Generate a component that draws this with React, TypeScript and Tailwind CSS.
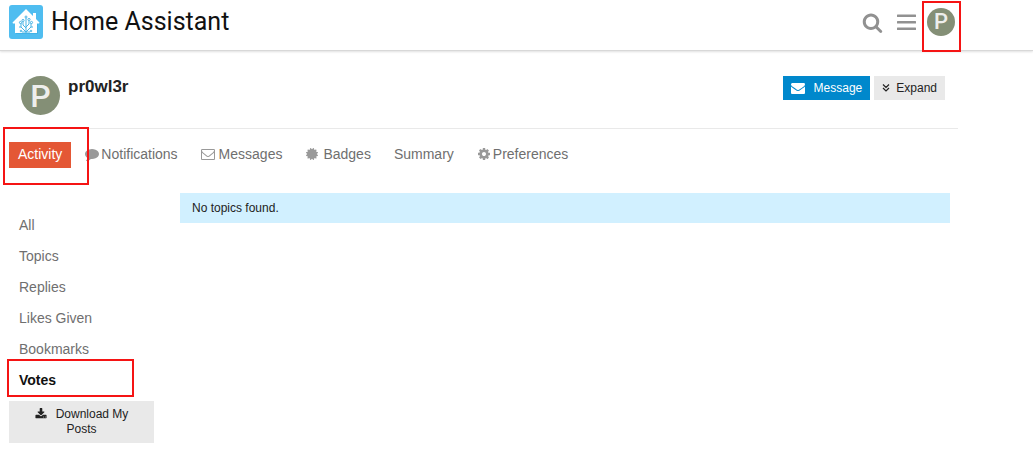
import clsx from 'clsx';

const icons = {
  search:
    'M1216 832q0-185-131.5-316.5t-316.5-131.5-316.5 131.5-131.5 316.5 131.5 316.5 316.5 131.5 316.5-131.5 131.5-316.5zm512 832q0 52-38 90t-90 38q-54 0-90-38l-343-342q-179 124-399 124-143 0-273.5-55.5t-225-150-150-225-55.5-273.5 55.5-273.5 150-225 225-150 273.5-55.5 273.5 55.5 225 150 150 225 55.5 273.5q0 220-124 399l343 343q37 37 37 90z',
  envelope:
    'M1792 710v794q0 66-47 113t-113 47h-1472q-66 0-113-47t-47-113v-794q44 49 101 87 362 246 497 345 57 42 92.5 65.5t94.5 48 110 24.5h2q51 0 110-24.5t94.5-48 92.5-65.5q170-123 498-345 57-39 100-87zm0-294q0 79-49 151t-122 123q-376 261-468 325-10 7-42.5 31t-54 38.5-52 32.5-57.5 27-50 9h-2q-23 0-50-9t-57.5-27-52-32.5-54-38.5-42.5-31q-91-64-262-182.5t-205-142.5q-62-42-117-115.5t-55-136.5q0-78 41.5-130t118.5-52h1472q65 0 112.5 47t47.5 113z',
  envelopeOutline:
    'M1664 1504v-768q-32 36-69 66-268 206-426 338-51 43-83 67t-86.5 48.5-102.5 24.5h-2q-48 0-102.5-24.5t-86.5-48.5-83-67q-158-132-426-338-37-30-69-66v768q0 13 9.5 22.5t22.5 9.5h1472q13 0 22.5-9.5t9.5-22.5zm0-1051v-24.5l-.5-13-3-12.5-5.5-9-9-7.5-14-2.5h-1472q-13 0-22.5 9.5t-9.5 22.5q0 168 147 284 193 152 401 317 6 5 35 29.5t46 37.5 44.5 31.5 50.5 27.5 43 9h2q20 0 43-9t50.5-27.5 44.5-31.5 46-37.5 35-29.5q208-165 401-317 54-43 100.5-115.5t46.5-131.5zm128-37v1088q0 66-47 113t-113 47h-1472q-66 0-113-47t-47-113v-1088q0-66 47-113t113-47h1472q66 0 113 47t47 113z',
  comment:
    'M1792 896q0 174-120 321.5t-326 233-450 85.5q-70 0-145-8-198 175-460 242-49 14-114 22-17 2-30.5-9t-17.5-29v-1q-3-4-.5-12t2-10 4.5-9.5l6-9 7-8.5 8-9q7-8 31-34.5t34.5-38 31-39.5 32.5-51 27-59 26-76q-157-89-247.5-220t-90.5-281q0-130 71-248.5t191-204.5 286-136.5 348-50.5q244 0 450 85.5t326 233 120 321.5z',
  certificate:
    'M1504 896l138 135q30 28 20 70-12 41-52 51l-188 48 53 186q12 41-19 70-29 31-70 19l-186-53-48 188q-10 40-51 52-12 2-19 2-31 0-51-22l-135-138-135 138q-28 30-70 20-41-11-51-52l-48-188-186 53q-41 12-70-19-31-29-19-70l53-186-188-48q-40-10-52-51-10-42 20-70l138-135-138-135q-30-28-20-70 12-41 52-51l188-48-53-186q-12-41 19-70 29-31 70-19l186 53 48-188q10-41 51-51 41-12 70 19l135 139 135-139q29-30 70-19 41 10 51 51l48 188 186-53q41-12 70 19 31 29 19 70l-53 186 188 48q40 10 52 51 10 42-20 70z',
  cog:
    'M1152 896q0-106-75-181t-181-75-181 75-75 181 75 181 181 75 181-75 75-181zm512-109v222q0 12-8 23t-20 13l-185 28q-19 54-39 91 35 50 107 138 10 12 10 25t-9 23q-27 37-99 108t-94 71q-12 0-26-9l-138-108q-44 23-91 38-16 136-29 186-7 28-36 28h-222q-14 0-24.5-8.5t-11.5-21.5l-28-184q-49-16-90-37l-141 107q-10 9-25 9-14 0-25-11-126-114-165-168-7-10-7-23 0-12 8-23 15-21 51-66.5t54-70.5q-27-50-41-99l-183-27q-13-2-21-12.5t-8-23.5v-222q0-12 8-23t19-13l186-28q14-46 39-92-40-57-107-138-10-12-10-24 0-10 9-23 26-36 98.5-107.5t94.5-71.5q13 0 26 10l138 107q44-23 91-38 16-136 29-186 7-28 36-28h222q14 0 24.5 8.5t11.5 21.5l28 184q49 16 90 37l142-107q9-9 24-9 13 0 25 10 129 119 165 170 7 8 7 22 0 12-8 23-15 21-51 66.5t-54 70.5q26 50 41 98l183 28q13 2 21 12.5t8 23.5z',
  download:
    'M1344 1344q0-26-19-45t-45-19-45 19-19 45 19 45 45 19 45-19 19-45zm256 0q0-26-19-45t-45-19-45 19-19 45 19 45 45 19 45-19 19-45zm128-224v320q0 40-28 68t-68 28h-1472q-40 0-68-28t-28-68v-320q0-40 28-68t68-28h465l135 136q58 56 136 56t136-56l136-136h464q40 0 68 28t28 68zm-325-569q17 41-14 70l-448 448q-18 19-45 19t-45-19l-448-448q-31-29-14-70 17-39 59-39h256v-448q0-26 19-45t45-19h256q26 0 45 19t19 45v448h256q42 0 59 39z',
};

type IconName = keyof typeof icons;

function Icon({ name, className }: { name: IconName; className?: string }) {
  return (
    <svg viewBox="0 0 1792 1792" fill="currentColor" aria-hidden="true" className={clsx('shrink-0', className)}>
      <path d={icons[name]} />
    </svg>
  );
}

function Logo() {
  return (
    <svg viewBox="0 0 34 34" aria-hidden="true" className="w-[34px] h-[34px]">
      <rect width="34" height="34" rx="3" fill="#4fbdf0" />
      <path d="M7 19h22v10H7z" fill="#2ea3d8" opacity="0.4" />
      <path d="M17 4 3.5 17.5 4 18.5h2V28h22v-9.5h2l.5-1L27 14V8h-3v3z" fill="#fff" />
      <g fill="none" stroke="#49b4e6" strokeWidth="1">
        <path d="M17 28V13M17 27l-5-5v-4M17 23l-3-3v-3M17 27l5-5v-4M17 22l3-3v-3M12 22h-2M22 22h2M17 27h-4M17 27h4" />
        <circle cx="17" cy="12" r="1" />
        <circle cx="14" cy="15.5" r="1.1" />
        <circle cx="20" cy="14.5" r="1.1" />
        <circle cx="11.5" cy="17.5" r="1.1" />
        <circle cx="22.5" cy="17.5" r="1.1" />
        <circle cx="12" cy="26" r="0.8" />
        <circle cx="22" cy="26" r="0.8" />
      </g>
    </svg>
  );
}

// Red marker frame drawn over the element it belongs to
function Marker({ className }: { className: string }) {
  return <span className={clsx('absolute z-10 border-2 border-[#f51414] pointer-events-none', className)} />;
}

function Avatar({ className }: { className: string }) {
  return (
    <span
      className={clsx(
        "flex items-center justify-center rounded-full bg-[#848f76] text-[#eeeeec] font-['Roboto',sans-serif] font-medium leading-none",
        className,
      )}
    >
      P
    </span>
  );
}

const tabs: { label: string; icon?: IconName; gap?: string; active?: boolean }[] = [
  { label: 'Activity', active: true },
  { label: 'Notifications', icon: 'comment', gap: 'gap-0.5' },
  { label: 'Messages', icon: 'envelopeOutline', gap: 'gap-1' },
  { label: 'Badges', icon: 'certificate', gap: 'gap-1' },
  { label: 'Summary' },
  { label: 'Preferences', icon: 'cog', gap: 'gap-0.5' },
];

const filters = ['All', 'Topics', 'Replies', 'Likes Given', 'Bookmarks', 'Votes'];

function Header() {
  return (
    <header className="border-b border-[#d8d8d8] shadow-[0_1px_2px_rgba(0,0,0,0.12)]">
      <div className="max-w-[958px] h-[50px] pl-[9px] pr-[3px] pb-1.5 flex items-center justify-between">
        <a href="#home" className="flex items-center gap-2 font-['Roboto',sans-serif] text-[25px] leading-8 text-[#111]">
          <Logo />
          Home Assistant
        </a>
        <div className="flex items-center text-[#919191]">
          <button type="button" aria-label="Search" className="mr-[14px]">
            <Icon name="search" className="w-[21px] h-[21px]" />
          </button>
          <button type="button" aria-label="Menu" className="mr-[11px]">
            <svg viewBox="0 0 19 19" fill="currentColor" aria-hidden="true" className="w-[19px] h-[19px]">
              <rect y="1.5" width="19" height="2.5" rx="0.5" />
              <rect y="8" width="19" height="2.5" rx="0.5" />
              <rect y="14.5" width="19" height="2.5" rx="0.5" />
            </svg>
          </button>
          <button type="button" aria-label="Account" className="relative">
            <Avatar className="w-7 h-7 text-[22px]" />
            <Marker className="-left-[5px] -right-[6px] -top-[7px] -bottom-[16px]" />
          </button>
        </div>
      </div>
    </header>
  );
}

function Profile() {
  return (
    <section className="h-[78px] ml-[9px] pl-3 pr-[13px] flex items-start border-b border-[#e9e9e9]">
      <Avatar className="w-[39px] h-[39px] mt-[25px] text-[32px]" />
      <h1 className="ml-2 mt-[26px] text-[17px] leading-5 font-bold">pr0wl3r</h1>
      <div className="ml-auto mt-[25px] flex gap-1 text-xs">
        <button type="button" className="h-6 px-2 flex items-center gap-[9px] bg-[#0088cc] text-white">
          <Icon name="envelope" className="w-[14px] h-[14px]" />
          Message
        </button>
        <button type="button" className="h-6 px-2 flex items-center gap-1.5 bg-[#e9e9e9]">
          <svg viewBox="0 0 8 10" fill="none" stroke="currentColor" strokeWidth="1.2" aria-hidden="true" className="w-2 h-[10px]">
            <path d="M1 1.5l3 3 3-3M1 5l3 3 3-3" />
          </svg>
          Expand
        </button>
      </div>
    </section>
  );
}

export default function App() {
  return (
    <div className="min-h-screen bg-white text-[#222] font-['Liberation_Sans',Arial,sans-serif]">
      <Header />
      <main className="max-w-[958px]">
        <Profile />
        <nav className="pl-[9px] pt-[13px]">
          <ul className="flex gap-[5px] text-sm text-[#6f6f6f]">
            {tabs.map((tab) => (
              <li key={tab.label} className="relative">
                <a
                  href={`#${tab.label.toLowerCase()}`}
                  className={clsx('h-[26px] px-[9px] pb-0.5 flex items-center', tab.gap, tab.active && 'bg-[#e45735] text-white')}
                >
                  {tab.icon && <Icon name={tab.icon} className="w-[14px] h-[14px] text-[#999]" />}
                  {tab.label}
                </a>
                {tab.active && <Marker className="-left-[6px] -right-[18px] -top-[15px] -bottom-[17px]" />}
              </li>
            ))}
          </ul>
        </nav>
        <div className="pl-[9px] pr-2 pt-[25px] flex items-start gap-[26px]">
          <aside className="w-[145px] shrink-0 pt-[17px]">
            <ul className="text-sm text-[#6f6f6f]">
              {filters.map((item) => (
                <li key={item} className="relative">
                  <a
                    href={`#${item.toLowerCase().replace(' ', '-')}`}
                    className={clsx('block pl-[10px] leading-[31px]', item === 'Votes' && 'font-bold text-[#111]')}
                  >
                    {item}
                  </a>
                  {item === 'Votes' && <Marker className="-left-[2px] right-[20px] -top-[6px] -bottom-[1px]" />}
                </li>
              ))}
            </ul>
            <button type="button" className="mt-[5px] w-full px-4 py-[6px] bg-[#e9e9e9] text-xs leading-[15px] text-center">
              <Icon name="download" className="inline w-3 h-3 mr-[9px] align-[-2px]" />
              Download My Posts
            </button>
          </aside>
          <p className="grow px-3 text-xs leading-[30px] bg-[#d1f0ff]">No topics found.</p>
        </div>
      </main>
    </div>
  );
}
